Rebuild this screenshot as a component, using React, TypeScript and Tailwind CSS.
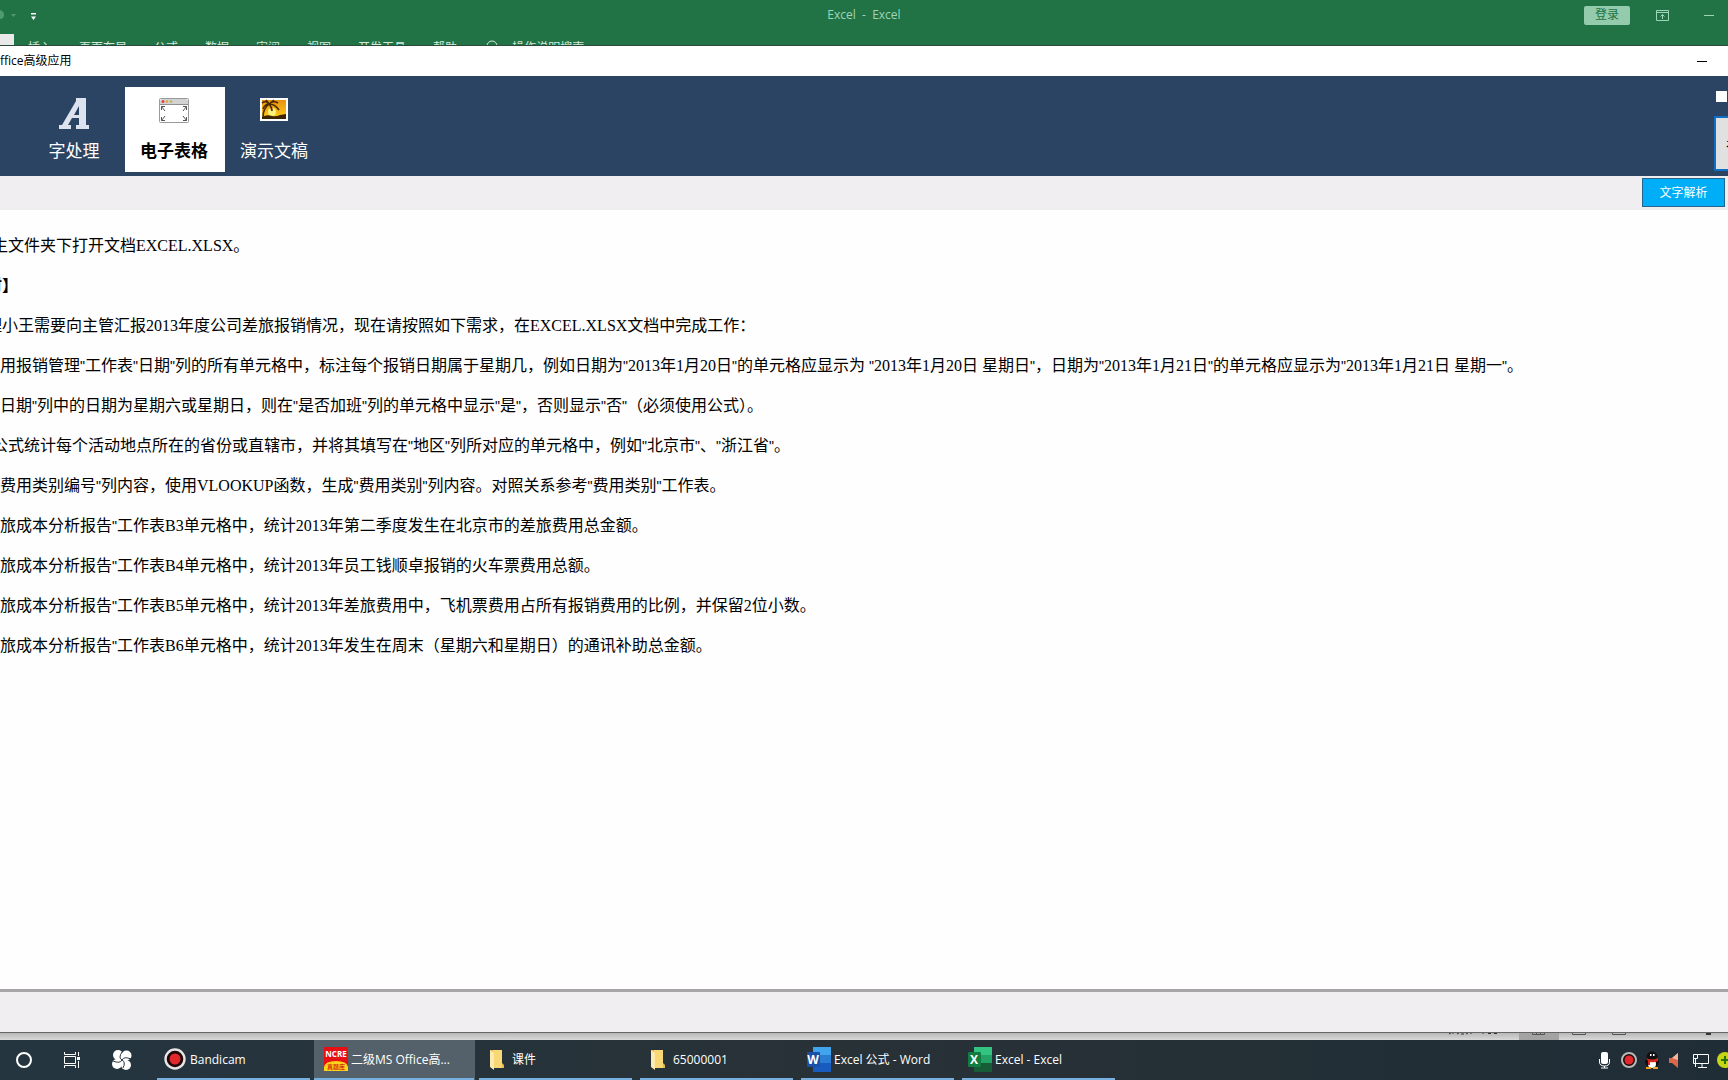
import type { ReactNode } from 'react'

const ribbonTabs = ['插入', '页面布局', '公式', '数据', '审阅', '视图', '开发工具', '帮助']

interface Line {
  text: string
  indent?: string
  bold?: boolean
}

const lines: Line[] = [
  { text: '生文件夹下打开文档EXCEL.XLSX。', indent: '-ml-2' },
  { text: '材】', indent: '-ml-3.5', bold: true },
  { text: '理小王需要向主管汇报2013年度公司差旅报销情况，现在请按照如下需求，在EXCEL.XLSX文档中完成工作：', indent: '-ml-3.5' },
  { text: '用报销管理"工作表"日期"列的所有单元格中，标注每个报销日期属于星期几，例如日期为"2013年1月20日"的单元格应显示为 "2013年1月20日 星期日"，日期为"2013年1月21日"的单元格应显示为"2013年1月21日 星期一"。' },
  { text: '日期"列中的日期为星期六或星期日，则在"是否加班"列的单元格中显示"是"，否则显示"否"（必须使用公式）。' },
  { text: '公式统计每个活动地点所在的省份或直辖市，并将其填写在"地区"列所对应的单元格中，例如"北京市"、"浙江省"。', indent: '-ml-2' },
  { text: '费用类别编号"列内容，使用VLOOKUP函数，生成"费用类别"列内容。对照关系参考"费用类别"工作表。' },
  { text: '旅成本分析报告"工作表B3单元格中，统计2013年第二季度发生在北京市的差旅费用总金额。' },
  { text: '旅成本分析报告"工作表B4单元格中，统计2013年员工钱顺卓报销的火车票费用总额。' },
  { text: '旅成本分析报告"工作表B5单元格中，统计2013年差旅费用中，飞机票费用占所有报销费用的比例，并保留2位小数。' },
  { text: '旅成本分析报告"工作表B6单元格中，统计2013年发生在周末（星期六和星期日）的通讯补助总金额。' },
]

// straight quotes are set in a narrower face than the rest of the line
function withQuotes(text: string) {
  return text.split('"').map((part, i) => (
    <span key={i}>
      {i > 0 && <span className="font-['Liberation_Sans',sans-serif] text-[14px]">"</span>}
      {part}
    </span>
  ))
}

function LetterIcon() {
  return (
    <svg width="30" height="31" viewBox="0 0 30 31" fill="#dce3ee">
      <path fillRule="evenodd" d="M17 0h10v27h3v4H17v-4h3v-7h-7l-4 7h3v4H0v-4h3L17 3zM20 8l-5 9h5z" />
    </svg>
  )
}

function SheetIcon() {
  return (
    <svg width="30" height="25" viewBox="0 0 30 25" fill="none">
      <rect x=".5" y=".5" width="29" height="24" rx="1" fill="#fff" stroke="#9a9a9a" />
      <path d="M1 6V3q0-2 2-2h24q2 0 2 2v3z" fill="#d2d2d2" />
      <path d="M1 6.500h28" stroke="#8f8f8f" />
      <circle cx="4" cy="3.500" r="1.500" fill="#e0443a" />
      <circle cx="8" cy="3.500" r="1.300" fill="#e5a04a" />
      <circle cx="12" cy="3.500" r="1.300" fill="#b9ba4f" />
      <path d="M2.500 12V8.500H6M2.500 8.500L6 13M24 8.500h3.500V12M27.500 8.500L24 13M2.500 19v3.500H6M2.500 22.500L6 18M24 22.500h3.500V19M27.500 22.500L24 18" stroke="#555" />
    </svg>
  )
}

function PictureIcon() {
  return (
    <svg width="28" height="23" viewBox="0 0 28 23">
      <defs>
        <linearGradient id="sunset" x1="0" y1="0" x2="0" y2="1">
          <stop offset="0" stopColor="#e8920f" />
          <stop offset="1" stopColor="#ffcf1d" />
        </linearGradient>
      </defs>
      <path d="M0 0h28v23H0z" fill="#fff" />
      <path d="M2 2h24v19H2z" fill="url(#sunset)" />
      <circle cx="12" cy="14" r="4" fill="#fff27a" />
      <path d="M2 19q5-3 10-1 4 1 8-1l6-1v5H2z" fill="#3c2405" />
      <path d="M3 19Q3 11 9 6M9 6Q6 2 2 5M9 6Q5 6 3 11M9 6q4-4 9-1M9 6q6 0 10 6M9 6q3 3 3 7M9 6L6 2M9 6l5-4" fill="none" stroke="#4a2a05" strokeWidth="1.600" />
    </svg>
  )
}

function FolderIcon() {
  return (
    <svg width="24" height="24" viewBox="0 0 24 24">
      <path d="M5 3h12v13l2 2v3H8z" fill="#e8b84a" />
      <path d="M8 3h9v18H8z" fill="#f8d775" />
      <path d="M5 3l4 3v17l-4-3z" fill="#fdeab0" />
    </svg>
  )
}

interface OfficeIconProps {
  letter: string
  colors: [string, string, string, string]
}

function OfficeIcon({ letter, colors }: OfficeIconProps) {
  return (
    <svg width="24" height="25" viewBox="0 0 24 25">
      <path d="M6 0h18v9H6z" fill={colors[0]} />
      <path d="M6 8h18v8H6z" fill={colors[1]} />
      <path d="M6 16h18v9H6z" fill={colors[2]} />
      <rect y="5" width="13" height="15" rx="1" fill={colors[3]} />
      <text x="6" y="17" textAnchor="middle" fontSize="12" fontWeight="700" fill="#fff" fontFamily="Open Sans, sans-serif">
        {letter}
      </text>
    </svg>
  )
}

function RecordIcon({ size }: { size: number }) {
  return (
    <svg width={size} height={size} viewBox="0 0 22 22">
      <circle cx="11" cy="11" r="9.500" fill="#210708" stroke="#e6e6e6" strokeWidth="2.400" />
      <circle cx="11" cy="11" r="5.500" fill="#e1282d" />
    </svg>
  )
}

function NcreIcon() {
  return (
    <svg width="24" height="24" viewBox="0 0 24 24">
      <path d="M0 0h24v24H0z" fill="#e60f14" />
      <path d="M0 24v-4q1-6 12-6t12 6v4z" fill="#ffd21c" />
      <text x="12" y="10" textAnchor="middle" fontSize="8" fontWeight="700" fill="#fff" fontFamily="Open Sans, sans-serif">NCRE</text>
      <text x="12" y="22" textAnchor="middle" fontSize="6" fontWeight="700" fill="#d4380d" fontFamily="Noto Sans CJK SC, sans-serif">真题库</text>
    </svg>
  )
}

interface Task {
  label: string
  icon: ReactNode
  active?: boolean
}

const tasks: Task[] = [
  { label: 'Bandicam', icon: <RecordIcon size={22} /> },
  { label: '二级MS Office高...', icon: <NcreIcon />, active: true },
  { label: '课件', icon: <FolderIcon /> },
  { label: '65000001', icon: <FolderIcon /> },
  { label: 'Excel 公式 - Word', icon: <OfficeIcon letter="W" colors={['#41a5ee', '#2b7cd3', '#185abd', '#1a50a8']} /> },
  { label: 'Excel - Excel', icon: <OfficeIcon letter="X" colors={['#33c481', '#21a366', '#185c37', '#107c41']} /> },
]

const modules = [
  { label: '字处理', icon: <LetterIcon /> },
  { label: '电子表格', icon: <SheetIcon />, active: true },
  { label: '演示文稿', icon: <PictureIcon /> },
]

function ExcelHeader() {
  return (
    <header className="flex h-[46px] shrink-0 flex-col overflow-hidden border-b border-[#2c4a3a] bg-[#217346] text-[#9fd5b7]">
      <div className="grid h-[30px] shrink-0 grid-cols-3 items-center">
        <div className="flex items-center">
          <svg width="40" height="14" viewBox="0 0 40 14">
            <path d="M0 2q4 1 4 5t-4 4z" fill="#4f9a70" />
            <path d="M11 6h5l-2.500 3z" fill="#4f9a70" />
            <path d="M31 5h5v1.500h-5zM31 8.500h5L33.500 12z" fill="#fff" />
          </svg>
        </div>
        <h1 className="text-center whitespace-pre">Excel  -  Excel</h1>
        <div className="flex items-center justify-end pr-3.5">
          <button className="mr-[26px] h-[19px] w-[46px] rounded-xs bg-[#93cbac] text-[#217346]">登录</button>
          <button aria-label="功能区显示选项" className="mr-[35px]">
            <svg width="13" height="11" viewBox="0 0 13 11" fill="none" stroke="currentColor">
              <path d="M.5.5h12v10H.5zM.5 2.500h12M6.500 9V4.500M4.500 6.500l2-2 2 2" />
            </svg>
          </button>
          <button aria-label="最小化 Excel" className="h-px w-2.5 bg-[#9fd5b7]" />
        </div>
      </div>
      <nav className="flex shrink-0 items-start gap-[27px] pt-1 text-[#d5eadd]">
        <div className="-mr-[13px] h-3 w-3.5 bg-[#e9e9e9]" />
        {ribbonTabs.map((tab) => (
          <button key={tab} className="shrink-0 pt-1.5 leading-4">
            {tab}
          </button>
        ))}
        <button className="flex shrink-0 items-start gap-3.5 pt-1.5 leading-4">
          <svg width="14" height="16" viewBox="0 0 14 16" fill="none" stroke="currentColor">
            <circle cx="8" cy="6" r="5" />
            <path d="M5 10l-4 5" />
          </svg>
          操作说明搜索
        </button>
      </nav>
    </header>
  )
}

function ModuleBar() {
  return (
    <div className="flex h-[100px] shrink-0 justify-between bg-[#2b4463]">
      <div className="flex pt-[11px] pl-[25px]">
        {modules.map((item) => (
          <button
            key={item.label}
            className={`flex h-[85px] w-[100px] flex-col items-center justify-between pt-[11px] pr-0.5 pb-[9px] text-[17px] leading-6 ${
              item.active ? 'bg-white font-bold text-black' : 'text-white'
            }`}
          >
            {item.icon}
            {item.label}
          </button>
        ))}
      </div>
      <div className="flex w-3.5 flex-col overflow-hidden pt-[15px]">
        <input type="checkbox" aria-label="置顶" className="ml-0.5 size-[11px] shrink-0 appearance-none bg-white" />
        <button className="mt-3.5 h-[55px] w-20 shrink-0 border-2 border-[#0f6fc5] bg-[#e1e1e1] pl-2.5 text-left text-base text-black">
          考试
        </button>
      </div>
    </div>
  )
}

function StatusStrip() {
  return (
    <div className="flex h-2 shrink-0 justify-end border-t border-[#666] bg-linear-to-b from-[#b8b8b8] to-[#d8d8d8]">
      <svg width="280" height="7" viewBox="0 0 280 7" fill="none" stroke="#555">
        <path d="M71 0h40v7H71z" fill="#a3a3a3" stroke="none" />
        <path d="M1 1l2-1M5 0v1M9 1l2-1M13 1h3M18 1l2-1M23 0v1M35 0v1M40 .5h3M46 .5h3" stroke="#333" />
        <path d="M84.500 0v1.500h12V0M88.500 0v1M92.500 0v1M124.500 0v1.500h13V0M164.500 0v1.500h13V0" />
        <path d="M258 0h5v2h-5z" fill="#333" stroke="none" />
      </svg>
    </div>
  )
}

function Tray() {
  return (
    <svg width="130" height="24" viewBox="0 0 130 24" fill="none" className="shrink-0">
      <rect x="3" y="4" width="7" height="12" rx="2" fill="#fff" />
      <path d="M1.500 11v3q0 4 5 4t5-4v-3M6.500 18v2M3 20h7" stroke="#fff" />
      <circle cx="31" cy="12" r="7" fill="#210708" stroke="#b9b9b9" strokeWidth="2" />
      <circle cx="31" cy="12" r="4.500" fill="#e1282d" />
      <ellipse cx="54" cy="14" rx="7" ry="6" fill="#111" />
      <circle cx="54" cy="9" r="5.500" fill="#111" />
      <ellipse cx="54" cy="16" rx="4" ry="4" fill="#fff" />
      <path d="M52 6h1.500v2H52zM55 6h1.500v2H55z" fill="#fff" />
      <path d="M48 10q6 3 12 0v3q-5 2-8 1v3h-2v-4z" fill="#d9291c" />
      <path d="M48 19h5v2h-5zM55 19h5v2h-5z" fill="#f0a51e" />
      <path d="M71 10h3l6-5v15l-6-5h-3z" fill="#d9674a" />
      <path d="M74 10l6-5v7z" fill="#f3b49c" />
      <path d="M99.500 6.500h11v9h-15v-5M104 16v3M100 19.500h9M95.500 6.500h4v4h-4zM97.500 11v8" stroke="#fff" />
      <circle cx="127" cy="12" r="8" fill="#c5d614" />
      <path d="M126 8h2v3h3v2h-3v3h-2v-3h-3v-2h3z" fill="#26700e" />
    </svg>
  )
}

function Taskbar() {
  return (
    <footer className="flex h-10 shrink-0 items-center bg-linear-to-r from-[#243540] via-[#283136] to-[#1f2d36] text-white">
      <div className="flex w-[153px] shrink-0 items-center pl-4">
        <button aria-label="Cortana" className="mr-8 size-4 rounded-full border-2 border-white" />
        <button aria-label="任务视图" className="mr-8">
          <svg width="16" height="16" viewBox="0 0 16 16" fill="none" stroke="#fff">
            <path d="M.5 0v2.500h11V0M.5 16v-2.500h11V16M.5 4.500h11v7H.5zM14.500 0v4M14.500 9v7" />
            <path d="M13 5h3v3h-3z" fill="#fff" stroke="none" />
          </svg>
        </button>
        <button aria-label="浏览器">
          <svg width="20" height="20" viewBox="0 0 20 20" fill="#fff">
            <circle cx="6" cy="5" r="5" />
            <circle cx="14.500" cy="5.500" r="5" />
            <circle cx="5" cy="14" r="5" />
            <circle cx="14" cy="15" r="5" />
            <circle cx="10" cy="10" r="5" />
            <path d="M10 10Q6 8 10 2M10 10q2-4 9-1M10 10q4 2 1 8M10 10q-2 4-9 1" fill="none" stroke="#26353e" />
          </svg>
        </button>
      </div>
      <div className="flex flex-1 self-stretch">
        {tasks.map((task) => (
          <button
            key={task.label}
            className={`flex w-[161px] flex-col ${task.active ? 'bg-[#55616a] pr-px' : 'px-1'}`}
          >
            <span className={`flex flex-1 items-center gap-[3px] whitespace-nowrap ${task.active ? 'pl-2.5' : 'pl-1.5'}`}>
              <span className="flex w-6 justify-center">{task.icon}</span>
              <span className="pt-0.5">{task.label}</span>
            </span>
            <span className="h-0.5 w-full bg-[#76b0e0]" />
          </button>
        ))}
      </div>
      <Tray />
    </footer>
  )
}

export default function App() {
  return (
    <div className="flex h-screen flex-col overflow-hidden bg-white font-['Open_Sans','Noto_Sans_CJK_SC',sans-serif] text-xs">
      <ExcelHeader />
      <div className="flex h-[30px] shrink-0 items-center justify-between pr-[21px] text-black">
        <h2>ffice高级应用</h2>
        <button aria-label="最小化" className="h-px w-2.5 bg-black" />
      </div>
      <ModuleBar />
      <div className="flex h-[34px] shrink-0 items-start justify-end bg-[#f0eef1] pt-0.5 pr-[3px]">
        <button className="h-[29px] w-[83px] border border-[#27648c] bg-[#00adf7] text-white">文字解析</button>
      </div>
      <main className="flex-1 overflow-hidden bg-[#fefefe] pt-4 font-['Liberation_Serif','Noto_Sans_CJK_SC',serif] text-base leading-10 text-black">
        {lines.map((line) => (
          <p key={line.text} className={`whitespace-nowrap ${line.indent ?? ''} ${line.bold ? 'font-bold' : ''}`}>
            {withQuotes(line.text)}
          </p>
        ))}
      </main>
      <div className="h-[43px] shrink-0 border-t-3 border-[#a7a5a7] bg-[#f0eef1]" />
      <StatusStrip />
      <Taskbar />
    </div>
  )
}
